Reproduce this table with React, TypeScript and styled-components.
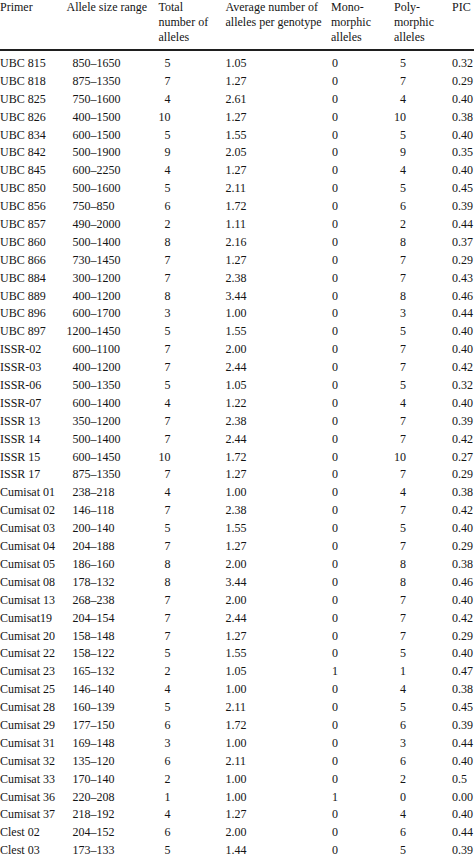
import React from "react";
import styled, { createGlobalStyle } from "styled-components";

const GlobalStyle = createGlobalStyle`
  html, body {
    margin: 0;
    padding: 0;
    background: #ffffff;
  }
  body {
    font-family: "Liberation Serif", "Times New Roman", serif;
    color: #141414;
    overflow: hidden;
  }
`;

const COLS = "66.5px 92px 67px 105.5px 63px 58px 1fr";

const Table = styled.div`
  width: 474px;
  font-size: 12px;
`;

const HeaderRow = styled.div`
  display: grid;
  grid-template-columns: ${COLS};
  line-height: 15px;
  padding-bottom: 4px;
  border-bottom: 2px solid #1f1f1f;
`;

const HeadCell = styled.div`
  display: flex;
  flex-direction: column;
  white-space: nowrap;
`;

const Body = styled.div`
  padding-top: 4px;
`;

const Row = styled.div`
  display: grid;
  grid-template-columns: ${COLS};
  height: 17.9px;
  line-height: 17.9px;
`;

const Cell = styled.div<{ $shift?: number }>`
  white-space: nowrap;
  margin-left: ${(p) => p.$shift ?? 0}px;
`;

const FS = "\u2007";

type Rec = [string, string, number, string, number, number, string];

const data: Rec[] = [
  ["UBC 815", "850–1650", 5, "1.05", 0, 5, "0.32"],
  ["UBC 818", "875–1350", 7, "1.27", 0, 7, "0.29"],
  ["UBC 825", "750–1600", 4, "2.61", 0, 4, "0.40"],
  ["UBC 826", "400–1500", 10, "1.27", 0, 10, "0.38"],
  ["UBC 834", "600–1500", 5, "1.55", 0, 5, "0.40"],
  ["UBC 842", "500–1900", 9, "2.05", 0, 9, "0.35"],
  ["UBC 845", "600–2250", 4, "1.27", 0, 4, "0.40"],
  ["UBC 850", "500–1600", 5, "2.11", 0, 5, "0.45"],
  ["UBC 856", "750–850", 6, "1.72", 0, 6, "0.39"],
  ["UBC 857", "490–2000", 2, "1.11", 0, 2, "0.44"],
  ["UBC 860", "500–1400", 8, "2.16", 0, 8, "0.37"],
  ["UBC 866", "730–1450", 7, "1.27", 0, 7, "0.29"],
  ["UBC 884", "300–1200", 7, "2.38", 0, 7, "0.43"],
  ["UBC 889", "400–1200", 8, "3.44", 0, 8, "0.46"],
  ["UBC 896", "600–1700", 3, "1.00", 0, 3, "0.44"],
  ["UBC 897", "1200–1450", 5, "1.55", 0, 5, "0.40"],
  ["ISSR-02", "600–1100", 7, "2.00", 0, 7, "0.40"],
  ["ISSR-03", "400–1200", 7, "2.44", 0, 7, "0.42"],
  ["ISSR-06", "500–1350", 5, "1.05", 0, 5, "0.32"],
  ["ISSR-07", "600–1400", 4, "1.22", 0, 4, "0.40"],
  ["ISSR 13", "350–1200", 7, "2.38", 0, 7, "0.39"],
  ["ISSR 14", "500–1400", 7, "2.44", 0, 7, "0.42"],
  ["ISSR 15", "600–1450", 10, "1.72", 0, 10, "0.27"],
  ["ISSR 17", "875–1350", 7, "1.27", 0, 7, "0.29"],
  ["Cumisat 01", "238–218", 4, "1.00", 0, 4, "0.38"],
  ["Cumisat 02", "146–118", 7, "2.38", 0, 7, "0.42"],
  ["Cumisat 03", "200–140", 5, "1.55", 0, 5, "0.40"],
  ["Cumisat 04", "204–188", 7, "1.27", 0, 7, "0.29"],
  ["Cumisat 05", "186–160", 8, "2.00", 0, 8, "0.38"],
  ["Cumisat 08", "178–132", 8, "3.44", 0, 8, "0.46"],
  ["Cumisat 13", "268–238", 7, "2.00", 0, 7, "0.40"],
  ["Cumisat19", "204–154", 7, "2.44", 0, 7, "0.42"],
  ["Cumisat 20", "158–148", 7, "1.27", 0, 7, "0.29"],
  ["Cumisat 22", "158–122", 5, "1.55", 0, 5, "0.40"],
  ["Cumisat 23", "165–132", 2, "1.05", 1, 1, "0.47"],
  ["Cumisat 25", "146–140", 4, "1.00", 0, 4, "0.38"],
  ["Cumisat 28", "160–139", 5, "2.11", 0, 5, "0.45"],
  ["Cumisat 29", "177–150", 6, "1.72", 0, 6, "0.39"],
  ["Cumisat 31", "169–148", 3, "1.00", 0, 3, "0.44"],
  ["Cumisat 32", "135–120", 6, "2.11", 0, 6, "0.40"],
  ["Cumisat 33", "170–140", 2, "1.00", 0, 2, "0.5"],
  ["Cumisat 36", "220–208", 1, "1.00", 1, 0, "0.00"],
  ["Cumisat 37", "218–192", 4, "1.27", 0, 4, "0.40"],
  ["Clest 02", "204–152", 6, "2.00", 0, 6, "0.44"],
  ["Clest 03", "173–133", 5, "1.44", 0, 5, "0.39"],
];

const headers: string[][] = [
  ["Primer"],
  ["Allele size range"],
  ["Total", "number of", "alleles"],
  ["Average number of", "alleles per genotype"],
  ["Mono-", "morphic", "alleles"],
  ["Poly-", "morphic", "alleles"],
  ["PIC"],
];

const padRange = (r: string) => (r.indexOf("–") === 3 ? FS + r : r);
const pad2 = (n: number) => (n < 10 ? FS + String(n) : String(n));

export default function App() {
  return (
    <>
      <GlobalStyle />
      <Table>
        <HeaderRow>
          {headers.map((lines, i) => (
            <HeadCell key={i}>
              {lines.map((l) => (
                <span key={l}>{l}</span>
              ))}
            </HeadCell>
          ))}
        </HeaderRow>
        <Body>
          {data.map((r) => (
            <Row key={r[0]}>
              <Cell>{r[0]}</Cell>
              <Cell>{padRange(r[1])}</Cell>
              <Cell>{pad2(r[2])}</Cell>
              <Cell>{r[3]}</Cell>
              <Cell $shift={1}>{r[4]}</Cell>
              <Cell>{pad2(r[5])}</Cell>
              <Cell>{r[6]}</Cell>
            </Row>
          ))}
        </Body>
      </Table>
    </>
  );
}
